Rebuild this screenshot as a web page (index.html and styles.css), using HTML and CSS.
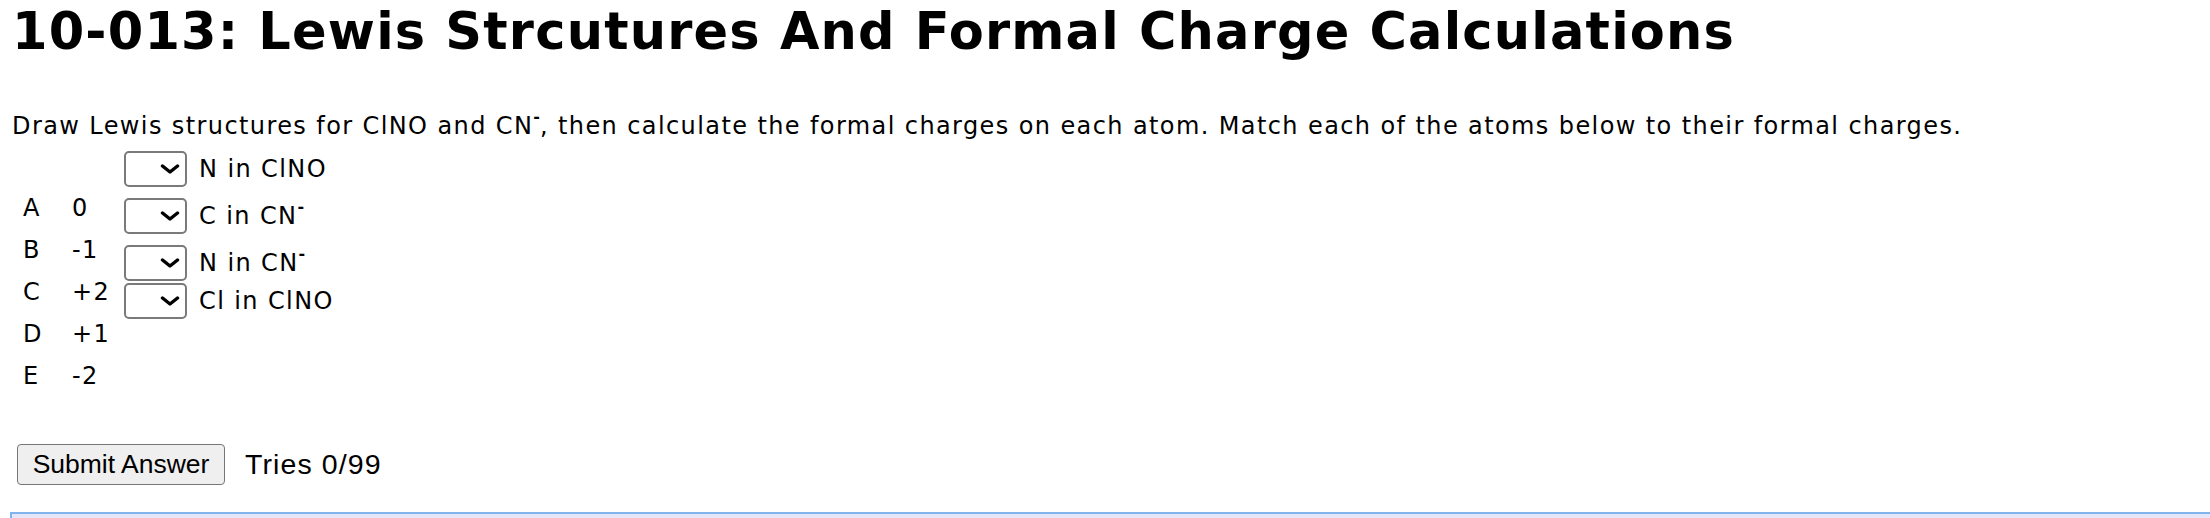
FILE: index.html
```html
<!DOCTYPE html>
<html lang="en">
<head>
<meta charset="utf-8">
<title>10-013: Lewis Strcutures And Formal Charge Calculations</title>
<link rel="stylesheet" href="styles.css">
</head>
<body class="page">
  <h1 class="title">10-013: Lewis Strcutures And Formal Charge Calculations</h1>
  <p class="prompt">Draw Lewis structures for ClNO and CN<sup class="chg">-</sup>, then calculate the formal charges on each atom. Match each of the atoms below to their formal charges.</p>
  <div class="match">
    <div class="keys">
      <span class="key">A</span><span class="val">0</span>
      <span class="key">B</span><span class="val">-1</span>
      <span class="key">C</span><span class="val">+2</span>
      <span class="key">D</span><span class="val">+1</span>
      <span class="key">E</span><span class="val">-2</span>
    </div>
    <div class="items">
      <div class="item">
        <span class="pick"><select class="sel"><option></option><option>A</option><option>B</option><option>C</option><option>D</option><option>E</option></select><svg class="chev" viewBox="0 0 20 10" width="20" height="10"><path d="M2.5 2 L10 8 L17.5 2" fill="none" stroke="#000" stroke-width="3.4" stroke-linecap="round" stroke-linejoin="round"/></svg></span>
        <span class="label">N in ClNO</span>
      </div>
      <div class="item has-sup">
        <span class="pick"><select class="sel"><option></option><option>A</option><option>B</option><option>C</option><option>D</option><option>E</option></select><svg class="chev" viewBox="0 0 20 10" width="20" height="10"><path d="M2.5 2 L10 8 L17.5 2" fill="none" stroke="#000" stroke-width="3.4" stroke-linecap="round" stroke-linejoin="round"/></svg></span>
        <span class="label">C in CN<sup class="chg">-</sup></span>
      </div>
      <div class="item has-sup">
        <span class="pick"><select class="sel"><option></option><option>A</option><option>B</option><option>C</option><option>D</option><option>E</option></select><svg class="chev" viewBox="0 0 20 10" width="20" height="10"><path d="M2.5 2 L10 8 L17.5 2" fill="none" stroke="#000" stroke-width="3.4" stroke-linecap="round" stroke-linejoin="round"/></svg></span>
        <span class="label">N in CN<sup class="chg">-</sup></span>
      </div>
      <div class="item">
        <span class="pick"><select class="sel"><option></option><option>A</option><option>B</option><option>C</option><option>D</option><option>E</option></select><svg class="chev" viewBox="0 0 20 10" width="20" height="10"><path d="M2.5 2 L10 8 L17.5 2" fill="none" stroke="#000" stroke-width="3.4" stroke-linecap="round" stroke-linejoin="round"/></svg></span>
        <span class="label">Cl in ClNO</span>
      </div>
    </div>
  </div>
  <div class="actions">
    <button class="submit" type="button">Submit Answer</button>
    <span class="tries">Tries 0/99</span>
  </div>
  <div class="feedback"></div>
</body>
</html>
```
FILE: styles.css
```css
html, body {
  margin: 0;
  padding: 0;
  background: #fff;
  overflow: hidden;
}

.page {
  font-family: "DejaVu Sans", Verdana, sans-serif;
  color: #000;
}

.title {
  font-size: 51px;
  font-weight: bold;
  line-height: 51px;
  letter-spacing: 1.2px;
  margin: 6px 0 0 12px;
  white-space: nowrap;
}

.prompt {
  font-size: 24px;
  line-height: 30px;
  letter-spacing: 1.4px;
  margin: 54px 0 0 12px;
  white-space: nowrap;
}

.chg {
  font-size: 16px;
  font-weight: bold;
  line-height: 0;
  letter-spacing: 0;
  vertical-align: 12px;
}

.match {
  display: flex;
  margin-top: 10px;
  font-size: 24px;
  letter-spacing: 1.4px;
}

.keys {
  display: grid;
  grid-template-columns: 49px auto;
  grid-auto-rows: 42px;
  align-items: center;
  width: 101px;
  margin-left: 23px;
  padding-top: 36px;
}

.items {
  display: flex;
  flex-direction: column;
}

.item {
  display: flex;
  align-items: center;
  gap: 12px;
  height: 36px;
}

.item + .item {
  margin-top: 2px;
}

.item.has-sup {
  margin-top: 11px;
}

.pick {
  position: relative;
  display: block;
  width: 63px;
  height: 36px;
}

.sel {
  appearance: none;
  -webkit-appearance: none;
  box-sizing: border-box;
  width: 63px;
  height: 36px;
  margin: 0;
  border: 2px solid #7a7a7a;
  border-radius: 5px;
  background: #fff;
  font-size: 20px;
  color: transparent;
}

.chev {
  position: absolute;
  left: 36px;
  top: 13px;
  pointer-events: none;
}

.label {
  white-space: nowrap;
  line-height: 36px;
}

.actions {
  display: flex;
  align-items: center;
  gap: 20px;
  margin: 47px 0 0 17px;
}

.submit {
  box-sizing: border-box;
  width: 208px;
  height: 41px;
  padding: 0;
  margin: 0;
  font-family: "Liberation Sans", Arial, sans-serif;
  font-size: 26.5px;
  color: #000;
  background: #efefef;
  border: 1.5px solid #767676;
  border-radius: 4px;
}

.tries {
  font-family: "Liberation Sans", Arial, sans-serif;
  font-size: 28.5px;
  letter-spacing: 1.1px;
}

.feedback {
  margin: 27px 0 0 10px;
  height: 20px;
  border-top: 2px solid #80b4ec;
  border-left: 2px solid #80b4ec;
  background: #e6e6fa;
}
```
